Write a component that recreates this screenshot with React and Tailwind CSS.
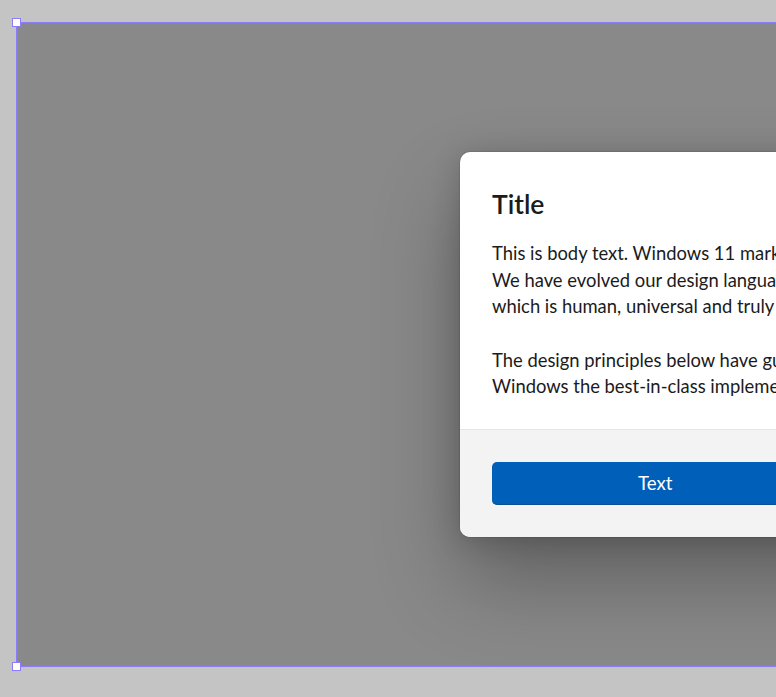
import React from "react";

const font = { fontFamily: 'Lato, "Noto Sans", sans-serif' };

function Handle({ className }) {
  return (
    <div
      className={
        "absolute w-[9px] h-[9px] bg-white border border-[#8b7cf8] " + className
      }
    />
  );
}

export default function App() {
  return (
    <div
      className="relative w-full h-[697px] bg-[#c4c4c4] overflow-hidden pt-[22px] pl-[16px]"
      style={font}
    >
      {/* frame */}
      <div className="relative w-[1618px] h-[645px] border border-[#8b7cf8] bg-[#898989] flex items-center justify-center">
        {/* dialog */}
        <div className="w-[730px] rounded-[10px] overflow-hidden bg-white shadow-[0_0_0_1px_rgba(0,0,0,0.08),0_43px_85px_rgba(0,0,0,0.3),0_3px_28px_rgba(0,0,0,0.18)] text-[#1b1b1b]">
          <div className="px-8 pt-8 pb-[29px]">
            <h1 className="text-[26.5px] leading-[37px] font-semibold pt-[2px]">Title</h1>
            <div className="mt-4 text-[18.4px] leading-[26.67px] whitespace-nowrap pt-[1px]">
              <p>
                This is body text. Windows 11 marks a visual evolution of the operating system.
                <br />
                We have evolved our design language alongside with Fluent to create a design
                <br />
                which is human, universal and truly feels like Windows.
              </p>
              <p className="mt-[26.67px]">
                The design principles below have guided us throughout the journey of making
                <br />
                Windows the best-in-class implementation of Fluent.
              </p>
            </div>
          </div>
          <div className="bg-[#f3f3f3] border-t border-[#e5e5e5] p-8 flex gap-[10.67px]">
            <button className="flex-1 h-[43px] rounded-[5px] bg-[#005fb8] border-b border-[#0a4f91] text-white text-[18.67px]">
              Text
            </button>
            <button className="flex-1 h-[43px] rounded-[5px] bg-white border border-black/10 text-[#1b1b1b] text-[18.67px]">
              Text
            </button>
          </div>
        </div>
      </div>
      <Handle className="left-[12px] top-[18px]" />
      <Handle className="left-[12px] top-[662px]" />
    </div>
  );
}
